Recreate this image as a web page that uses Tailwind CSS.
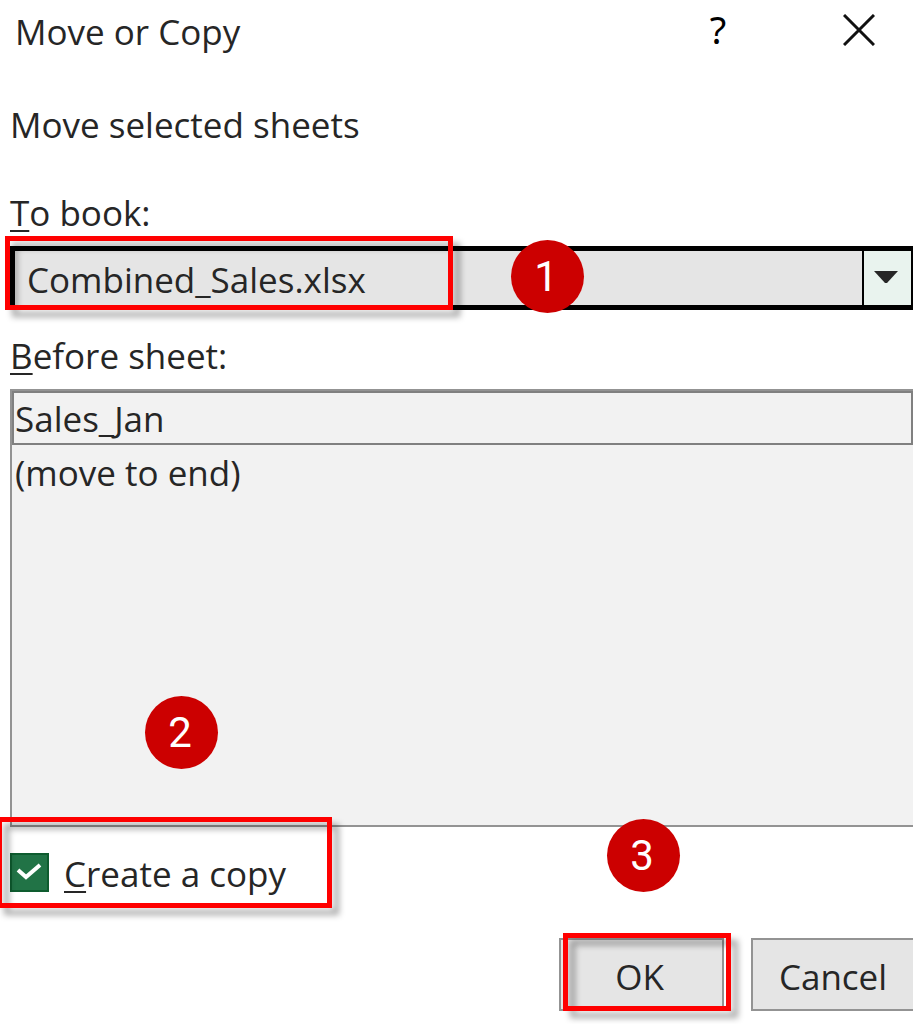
<!DOCTYPE html>
<html lang="en">
<head>
<meta charset="utf-8">
<title>Move or Copy</title>
<script src="https://cdn.jsdelivr.net/npm/@tailwindcss/browser@4"></script>
</head>
<body class="bg-white">
<main class="flex min-h-screen flex-col overflow-hidden bg-white pb-[13px] pl-[10px] font-['Open_Sans','Noto_Sans',sans-serif] text-[35px] leading-[48px] text-[#262626]">
  <header class="flex items-center pt-[8px] pr-[33px] pl-[5px]">
    <h1 class="flex-1">Move or Copy</h1>
    <button type="button" aria-label="Help" class="mr-[104px] h-[48px] w-[32px] pb-[6px] text-center font-['Noto_Sans',sans-serif] text-[38px] leading-[42px] text-black">?</button>
    <button type="button" aria-label="Close" class="flex h-[48px] w-[42px] items-center justify-center pb-[4px]">
      <svg width="32" height="32" viewBox="0 0 32 32" fill="none" stroke="#111" stroke-width="3"><path d="M1 1 31 31M31 1 1 31"/></svg>
    </button>
  </header>

  <p class="mt-[45px]">Move selected sheets</p>

  <label for="book" class="mt-[40px]"><span class="underline decoration-2 underline-offset-4">T</span>o book:</label>
  <div class="relative mt-[9px] h-[64px]">
    <select id="book" class="h-full w-full appearance-none rounded-none border-[5px] border-r-2 border-black bg-[#e5e5e5] pt-[4px] pr-[60px] pl-[12px] outline-none">
      <option>Combined_Sales.xlsx</option>
    </select>
    <span class="pointer-events-none absolute top-[5px] right-[2px] bottom-[5px] flex w-[49px] items-center justify-center border-l-2 border-black bg-[#e9f3ee] pr-[4px]">
      <svg width="24" height="12" viewBox="0 0 24 12" class="mb-[2px]"><path d="M0 0H24L13 12H11Z" fill="#262626"/></svg>
    </span>
    <span class="pointer-events-none absolute -top-[10px] -left-[5px] h-[74px] w-[448px] border-[5px] border-[#f00] drop-shadow-[7px_7px_3px_rgba(0,0,0,0.35)]"></span>
    <span class="absolute -top-[6px] left-[501px] flex size-[73px] items-center justify-center rounded-full bg-[#c00] pr-[3px] font-[Roboto,sans-serif] text-[42px] text-white">1</span>
  </div>

  <label for="sheets" class="mt-[22px]"><span class="underline decoration-2 underline-offset-4">B</span>efore sheet:</label>
  <div class="relative mt-[9px] flex min-h-[438px] flex-1">
    <select id="sheets" size="7" class="w-full appearance-none overflow-hidden rounded-none border-2 border-r-0 border-[#939393] bg-[#f2f2f2] p-0 outline-none">
      <option class="min-h-[54px] border-2 border-[#808080] p-0 pt-[2px] pl-[1px] leading-[48px]">Sales_Jan</option>
      <option class="min-h-[54px] p-0 pt-[4px] pl-[3px] leading-[50px]">(move to end)</option>
    </select>
    <span class="absolute bottom-[58px] left-[135px] flex size-[73px] items-center justify-center rounded-full bg-[#c00] pr-[3px] font-[Roboto,sans-serif] text-[42px] text-white">2</span>
  </div>

  <div class="relative mt-[21px] flex h-[48px] items-center">
    <input id="copy" type="checkbox" checked class="peer size-[39px] appearance-none border-2 border-[#0e5c2f] bg-[#217346]">
    <svg class="pointer-events-none absolute left-[6px] hidden peer-checked:block" width="26" height="18" viewBox="0 0 26 18" fill="none" stroke="#fff" stroke-width="4"><path d="M2 7 10 14 24 2"/></svg>
    <label for="copy" class="pt-[4px] pl-[15px]"><span class="underline decoration-2 underline-offset-4">C</span>reate a copy</label>
    <span class="pointer-events-none absolute -top-[31px] -left-[13px] h-[91px] w-[335px] border-[5px] border-[#f00] drop-shadow-[7px_7px_3px_rgba(0,0,0,0.35)]"></span>
    <span class="absolute -top-[29px] right-[233px] flex size-[73px] items-center justify-center rounded-full bg-[#c00] pr-[3px] font-[Roboto,sans-serif] text-[42px] text-white">3</span>
  </div>

  <footer class="mt-[42px] flex justify-end gap-[27px]">
    <div class="relative h-[73px]">
      <button type="button" class="h-[73px] w-[165px] border-2 border-[#939393] bg-[#e5e5e5] pt-[4px] pr-[4px]">OK</button>
      <span class="pointer-events-none absolute -top-[5px] left-[4px] h-[78px] w-[168px] border-[5px] border-[#f00] drop-shadow-[7px_7px_3px_rgba(0,0,0,0.35)]"></span>
    </div>
    <button type="button" class="h-[73px] w-[162px] border-2 border-r-0 border-[#939393] bg-[#e5e5e5] pt-[4px]">Cancel</button>
  </footer>
</main>
</body>
</html>
